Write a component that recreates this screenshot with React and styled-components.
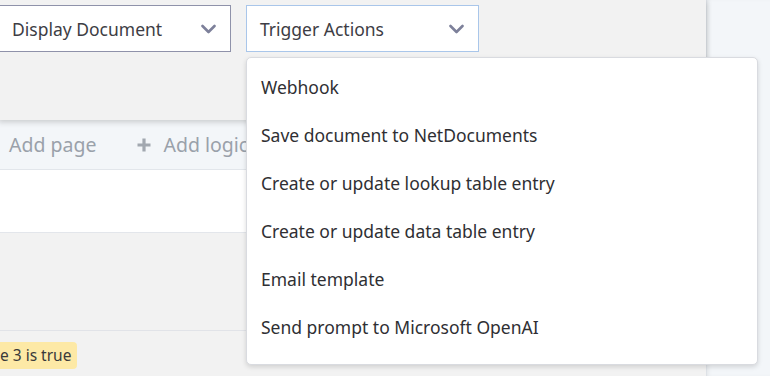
import React from 'react';
import styled, { createGlobalStyle } from 'styled-components';

const Global = createGlobalStyle`
  html, body { margin: 0; padding: 0; }
  body {
    width: 770px;
    height: 376px;
    overflow: hidden;
    font-family: "Noto Sans", "Open Sans", sans-serif;
    background: #f2f2f2;
  }
`;

const Page = styled.div`
  display: flex;
  width: 770px;
  height: 376px;
  position: relative;
  overflow: hidden;
`;

const Main = styled.div`
  width: 706px;
  display: flex;
  flex-direction: column;
  background: #f2f2f2;
`;

const Side = styled.div`
  flex: 1;
  background: #f3f6f9;
  border-left: 1px solid #dde1e6;
  box-shadow: inset 3px 0 4px -2px rgba(0, 0, 0, 0.08);
`;

const Toolbar = styled.div`
  height: 120px;
  box-sizing: border-box;
  padding-top: 5px;
  margin-left: -2px;
  display: flex;
  align-items: flex-start;
  gap: 15px;
  position: relative;
  z-index: 1;
  box-shadow: 0 2px 6px rgba(0, 0, 0, 0.18);
  background: #f2f2f2;
`;

const Select = styled.div`
  width: 233px;
  height: 47px;
  box-sizing: border-box;
  background: #fff;
  border: 1px solid ${p => (p.$active ? '#a9c6ea' : '#8f92aa')};
  display: flex;
  align-items: center;
  justify-content: space-between;
  padding: 0 14px 0 13px;
  font-size: 17.5px;
  color: #3d3d44;
`;

const Chevron = () => (
  <svg width="15" height="10" viewBox="0 0 15 10">
    <path d="M1.5 2 L7.5 8 L13.5 2" fill="none" stroke="#7d809a" strokeWidth="2.6" strokeLinecap="round" strokeLinejoin="round" />
  </svg>
);

const Tabs = styled.div`
  height: 50px;
  box-sizing: border-box;
  background: #f3f6f9;
  border-bottom: 1px solid #e2e6eb;
  display: flex;
  align-items: center;
  padding-left: 9px;
  gap: 40px;
  font-size: 19.5px;
  color: #9aa1aa;
`;

const Tab = styled.span`
  display: flex;
  align-items: center;
  gap: 11px;
`;

const Plus = () => (
  <svg width="16" height="16" viewBox="0 0 16 16">
    <path d="M8 1.5 V14.5 M1.5 8 H14.5" stroke="#a2a8b0" strokeWidth="3.2" />
  </svg>
);

const WhiteRow = styled.div`
  height: 62px;
  background: #fff;
  border-bottom: 1px solid #e3e6eb;
`;

const GrayArea = styled.div`
  height: 97px;
  border-bottom: 1px solid #e1e3e8;
`;

const Footer = styled.div`
  padding-top: 11px;
`;

const Badge = styled.span`
  display: inline-block;
  background: #fde9a6;
  color: #3a3a3a;
  font-size: 15.5px;
  line-height: 27px;
  padding: 0 6px 0 0;
  border-radius: 0 4px 4px 0;
`;

const Menu = styled.ul`
  position: absolute;
  left: 246px;
  top: 57px;
  width: 512px;
  margin: 0;
  padding: 5px 0 13px;
  list-style: none;
  box-sizing: border-box;
  background: #fff;
  border: 1px solid #d9dbe0;
  border-radius: 5px;
  box-shadow: 0 2px 5px rgba(0, 0, 0, 0.14);
  z-index: 5;
`;

const Item = styled.li`
  height: 48px;
  display: flex;
  align-items: center;
  padding-left: 14px;
  font-size: 17.5px;
  color: #2f2f33;
`;

const actions = [
  'Webhook',
  'Save document to NetDocuments',
  'Create or update lookup table entry',
  'Create or update data table entry',
  'Email template',
  'Send prompt to Microsoft OpenAI',
];

export default function App() {
  return (
    <Page>
      <Global />
      <Main>
        <Toolbar>
          <Select>
            Display Document
            <Chevron />
          </Select>
          <Select $active>
            Trigger Actions
            <Chevron />
          </Select>
        </Toolbar>
        <Tabs>
          <Tab>Add page</Tab>
          <Tab>
            <Plus />
            Add logic
          </Tab>
        </Tabs>
        <WhiteRow />
        <GrayArea />
        <Footer>
          <Badge>e 3 is true</Badge>
        </Footer>
      </Main>
      <Side />
      <Menu>
        {actions.map(a => (
          <Item key={a}>{a}</Item>
        ))}
      </Menu>
    </Page>
  );
}
